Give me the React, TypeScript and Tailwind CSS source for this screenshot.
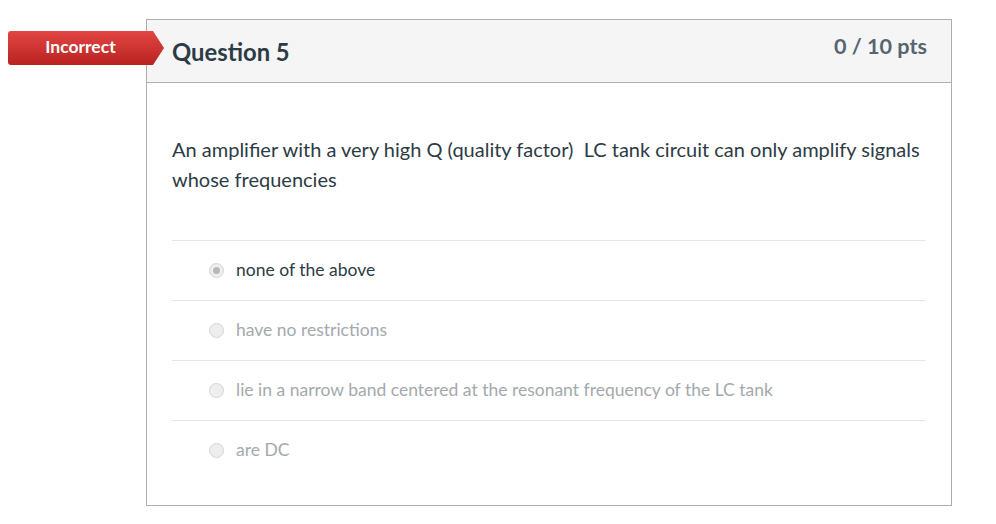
import React from 'react';

const answers = [
  { text: 'none of the above', selected: true },
  { text: 'have no restrictions', selected: false },
  { text: 'lie in a narrow band centered at the resonant frequency of the LC tank', selected: false },
  { text: 'are DC', selected: false },
];

const Radio: React.FC<{ selected: boolean }> = ({ selected }) => (
  <span className="relative flex h-[15px] w-[15px] items-center justify-center rounded-full border border-[#d4d4d4] bg-[#eeeeee]">
    {selected && <span className="h-[7px] w-[7px] rounded-full bg-[#b8b8b8]" />}
  </span>
);

export default function App() {
  return (
    <div className="relative min-h-[524px] w-[996px] bg-white pl-[146px] pt-[19px] font-['Lato','Noto_Sans',sans-serif]">
      {/* Incorrect tag overlapping the card */}
      <div
        className="absolute left-[8px] top-[31px] flex h-[34px] w-[156px] items-center rounded-l-[3px] bg-gradient-to-b from-[#e34543] to-[#b82221] pr-[11px]"
        style={{ clipPath: 'polygon(0 0, calc(100% - 11px) 0, 100% 50%, calc(100% - 11px) 100%, 0 100%)' }}
      >
        <span className="w-full pb-[2px] text-center text-[17.5px] font-bold text-white">Incorrect</span>
      </div>

      <div className="w-[806px] border border-[#adadad] bg-white">
        {/* Header */}
        <div className="flex h-[63px] justify-between border-b border-[#adadad] bg-[#f5f5f5] pl-[25px] pr-[24px]">
          <h2 className="pt-[16px] text-[23.8px] font-bold leading-[32px] text-[#2d3b45]">Question 5</h2>
          <div className="pt-[12px] text-[21.6px] font-bold leading-[28px] text-[#556572]">0 / 10 pts</div>
        </div>

        {/* Body */}
        <div className="px-[25px] pb-[25px] pt-[51px]">
          <p className="text-[20px] leading-[30px] text-[#2d3b45]">
            An amplifier with a very high Q (quality factor)&nbsp; LC tank circuit can only amplify signals whose
            frequencies
          </p>
          <div className="mt-[46px]">
            {answers.map((a) => (
              <div key={a.text} className="flex h-[60px] items-center gap-[12px] border-t border-[#e6e6e6] pl-[37px]">
                <Radio selected={a.selected} />
                <span className={`text-[17.5px] ${a.selected ? 'text-[#2d3b45]' : 'text-[#a3a9ad]'}`}>{a.text}</span>
              </div>
            ))}
          </div>
        </div>
      </div>
    </div>
  );
}
